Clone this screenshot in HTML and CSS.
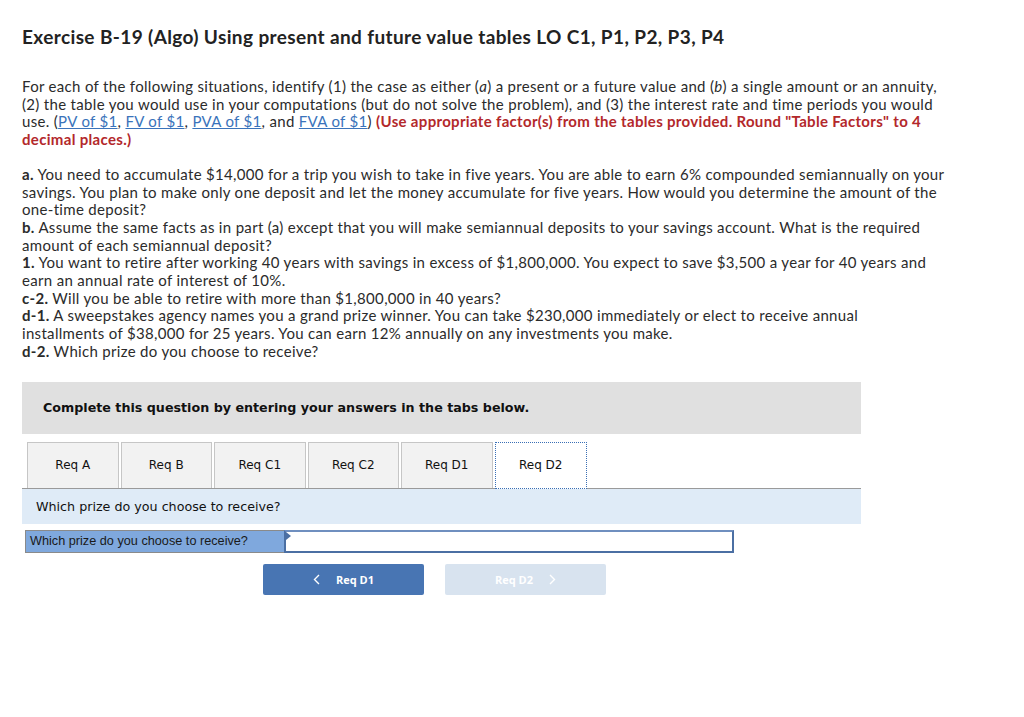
FILE: index.html
```html
<!DOCTYPE html>
<html lang="en">
<head>
    <meta charset="UTF-8">
    <title>Exercise B-19 (Algo)</title>
    <link rel="stylesheet" href="styles.css">
</head>
<body>
    <div class="page">
        <h1 class="title">Exercise B-19 (Algo) Using present and future value tables LO C1, P1, P2, P3, P4</h1>

        <p class="intro">For each of the following situations, identify (1) the case as either (<i>a</i>) a present or a future value and (<i>b</i>) a single amount or an annuity, (2) the table you would use in your computations (but do not solve the problem), and (3) the interest rate and time periods you would use. (<a href="#">PV of $1</a>, <a href="#">FV of $1</a>, <a href="#">PVA of $1</a>, and <a href="#">FVA of $1</a>) <span class="warn">(Use appropriate factor(s) from the tables provided. Round "Table Factors" to 4 decimal places.)</span></p>

        <p class="parts">
            <b>a.</b> You need to accumulate $14,000 for a trip you wish to take in five years. You are able to earn 6% compounded semiannually on your savings. You plan to make only one deposit and let the money accumulate for five years. How would you determine the amount of the one-time deposit?<br>
            <b>b.</b> Assume the same facts as in part (a) except that you will make semiannual deposits to your savings account. What is the required amount of each semiannual deposit?<br>
            <b>1.</b> You want to retire after working 40 years with savings in excess of $1,800,000. You expect to save $3,500 a year for 40 years and earn an annual rate of interest of 10%.<br>
            <b>c-2.</b> Will you be able to retire with more than $1,800,000 in 40 years?<br>
            <b>d-1.</b> A sweepstakes agency names you a grand prize winner. You can take $230,000 immediately or elect to receive annual<br>installments of $38,000 for 25 years. You can earn 12% annually on any investments you make.<br>
            <b>d-2.</b> Which prize do you choose to receive?
        </p>

        <div class="question">
            <div class="question-head">Complete this question by entering your answers in the tabs below.</div>

            <div class="tabs">
                <div class="tab">Req A</div>
                <div class="tab">Req B</div>
                <div class="tab">Req C1</div>
                <div class="tab">Req C2</div>
                <div class="tab">Req D1</div>
                <div class="tab active">Req D2</div>
            </div>

            <div class="prompt">Which prize do you choose to receive?</div>

            <div class="answer-row">
                <div class="answer-label">Which prize do you choose to receive?</div>
                <div class="answer-input"><span class="marker"></span></div>
            </div>

            <div class="nav">
                <button class="nav-btn prev">
                    <svg class="chev" width="7" height="11" viewBox="0 0 7 11"><path d="M6 1 L1.5 5.5 L6 10" fill="none" stroke="#ffffff" stroke-width="1.4"/></svg>
                    Req D1
                </button>
                <button class="nav-btn next">
                    Req D2
                    <svg class="chev" width="7" height="11" viewBox="0 0 7 11"><path d="M1 1 L5.5 5.5 L1 10" fill="none" stroke="#ffffff" stroke-width="1.4"/></svg>
                </button>
            </div>
        </div>
    </div>
</body>
</html>
```

FILE: styles.css
```css
body {
    margin: 0;
    background: #ffffff;
    color: #2b2b2b;
    font-family: Lato, "Open Sans", Arial, sans-serif;
}

.page {
    padding: 26px 22px 0 22px;
    width: 926px;
}

.title {
    margin: 0 0 30px 0;
    font-size: 19px;
    font-weight: bold;
    letter-spacing: 0.38px;
    color: #222222;
    line-height: 22px;
}

.intro, .parts {
    margin: 0;
    font-size: 15px;
    letter-spacing: 0.32px;
    line-height: 17.7px;
}

.intro {
    margin-bottom: 17px;
}

.intro a {
    color: #3a73bb;
    text-decoration: underline;
}

.warn {
    color: #b3282b;
    font-weight: bold;
}

.question {
    margin-top: 21px;
    width: 839px;
}

.question-head {
    background-color: #e0e0e0;
    height: 52px;
    padding-left: 21px;
    display: flex;
    align-items: center;
    font-family: "DejaVu Sans", Verdana, sans-serif;
    font-size: 12.7px;
    font-weight: bold;
    color: #111111;
}

.tabs {
    display: flex;
    gap: 2px;
    margin-top: 8px;
    padding-left: 5px;
    border-bottom: 1px solid #9a9a9a;
}

.tab {
    width: 89.5px;
    height: 45px;
    display: flex;
    align-items: center;
    justify-content: center;
    background-color: #f2f2f2;
    border: 1px solid #c6c6c6;
    border-bottom: none;
    font-family: "DejaVu Sans", Verdana, sans-serif;
    font-size: 12px;
    color: #111111;
}

.tab.active {
    width: 90.5px;
    background-color: #ffffff;
    border: 1px dotted #3a6fb5;
    margin-bottom: -1px;
    height: 45px;
}

.prompt {
    background-color: #dfebf7;
    height: 35px;
    padding-left: 14px;
    display: flex;
    align-items: center;
    font-family: "DejaVu Sans", Verdana, sans-serif;
    font-size: 12.7px;
    color: #111111;
}

.answer-row {
    display: flex;
    margin-top: 6px;
    margin-left: 3px;
    width: 709px;
    height: 23px;
}

.answer-label {
    width: 254px;
    background-color: #7fa8dd;
    border: 1px solid #8a8a8a;
    border-right: none;
    padding-left: 4px;
    display: flex;
    align-items: center;
    font-family: "Liberation Sans", Arial, sans-serif;
    font-size: 12.7px;
    color: #1a1a1a;
}

.answer-input {
    flex: 1;
    position: relative;
    background-color: #ffffff;
    border: 2px solid #4b6fa3;
    border-top-color: #6f8fbf;
}

.marker {
    position: absolute;
    top: 0;
    left: 0;
    width: 0;
    height: 0;
    border-top: 4px solid transparent;
    border-bottom: 4px solid transparent;
    border-left: 5px solid #4b6fa3;
}

.nav {
    display: flex;
    gap: 21px;
    margin-top: 11px;
    padding-left: 241px;
}

.nav-btn {
    width: 161px;
    height: 31px;
    border: none;
    border-radius: 2px;
    font-family: "Open Sans", Arial, sans-serif;
    font-size: 11px;
    font-weight: bold;
    color: #ffffff;
    display: flex;
    align-items: center;
    justify-content: center;
    gap: 16px;
}

.nav-btn.prev {
    background-color: #4875b3;
    padding-right: 6px;
}

.nav-btn.next {
    background-color: #d8e3ef;
    padding-left: 6px;
}

.chev {
    display: block;
}
```
